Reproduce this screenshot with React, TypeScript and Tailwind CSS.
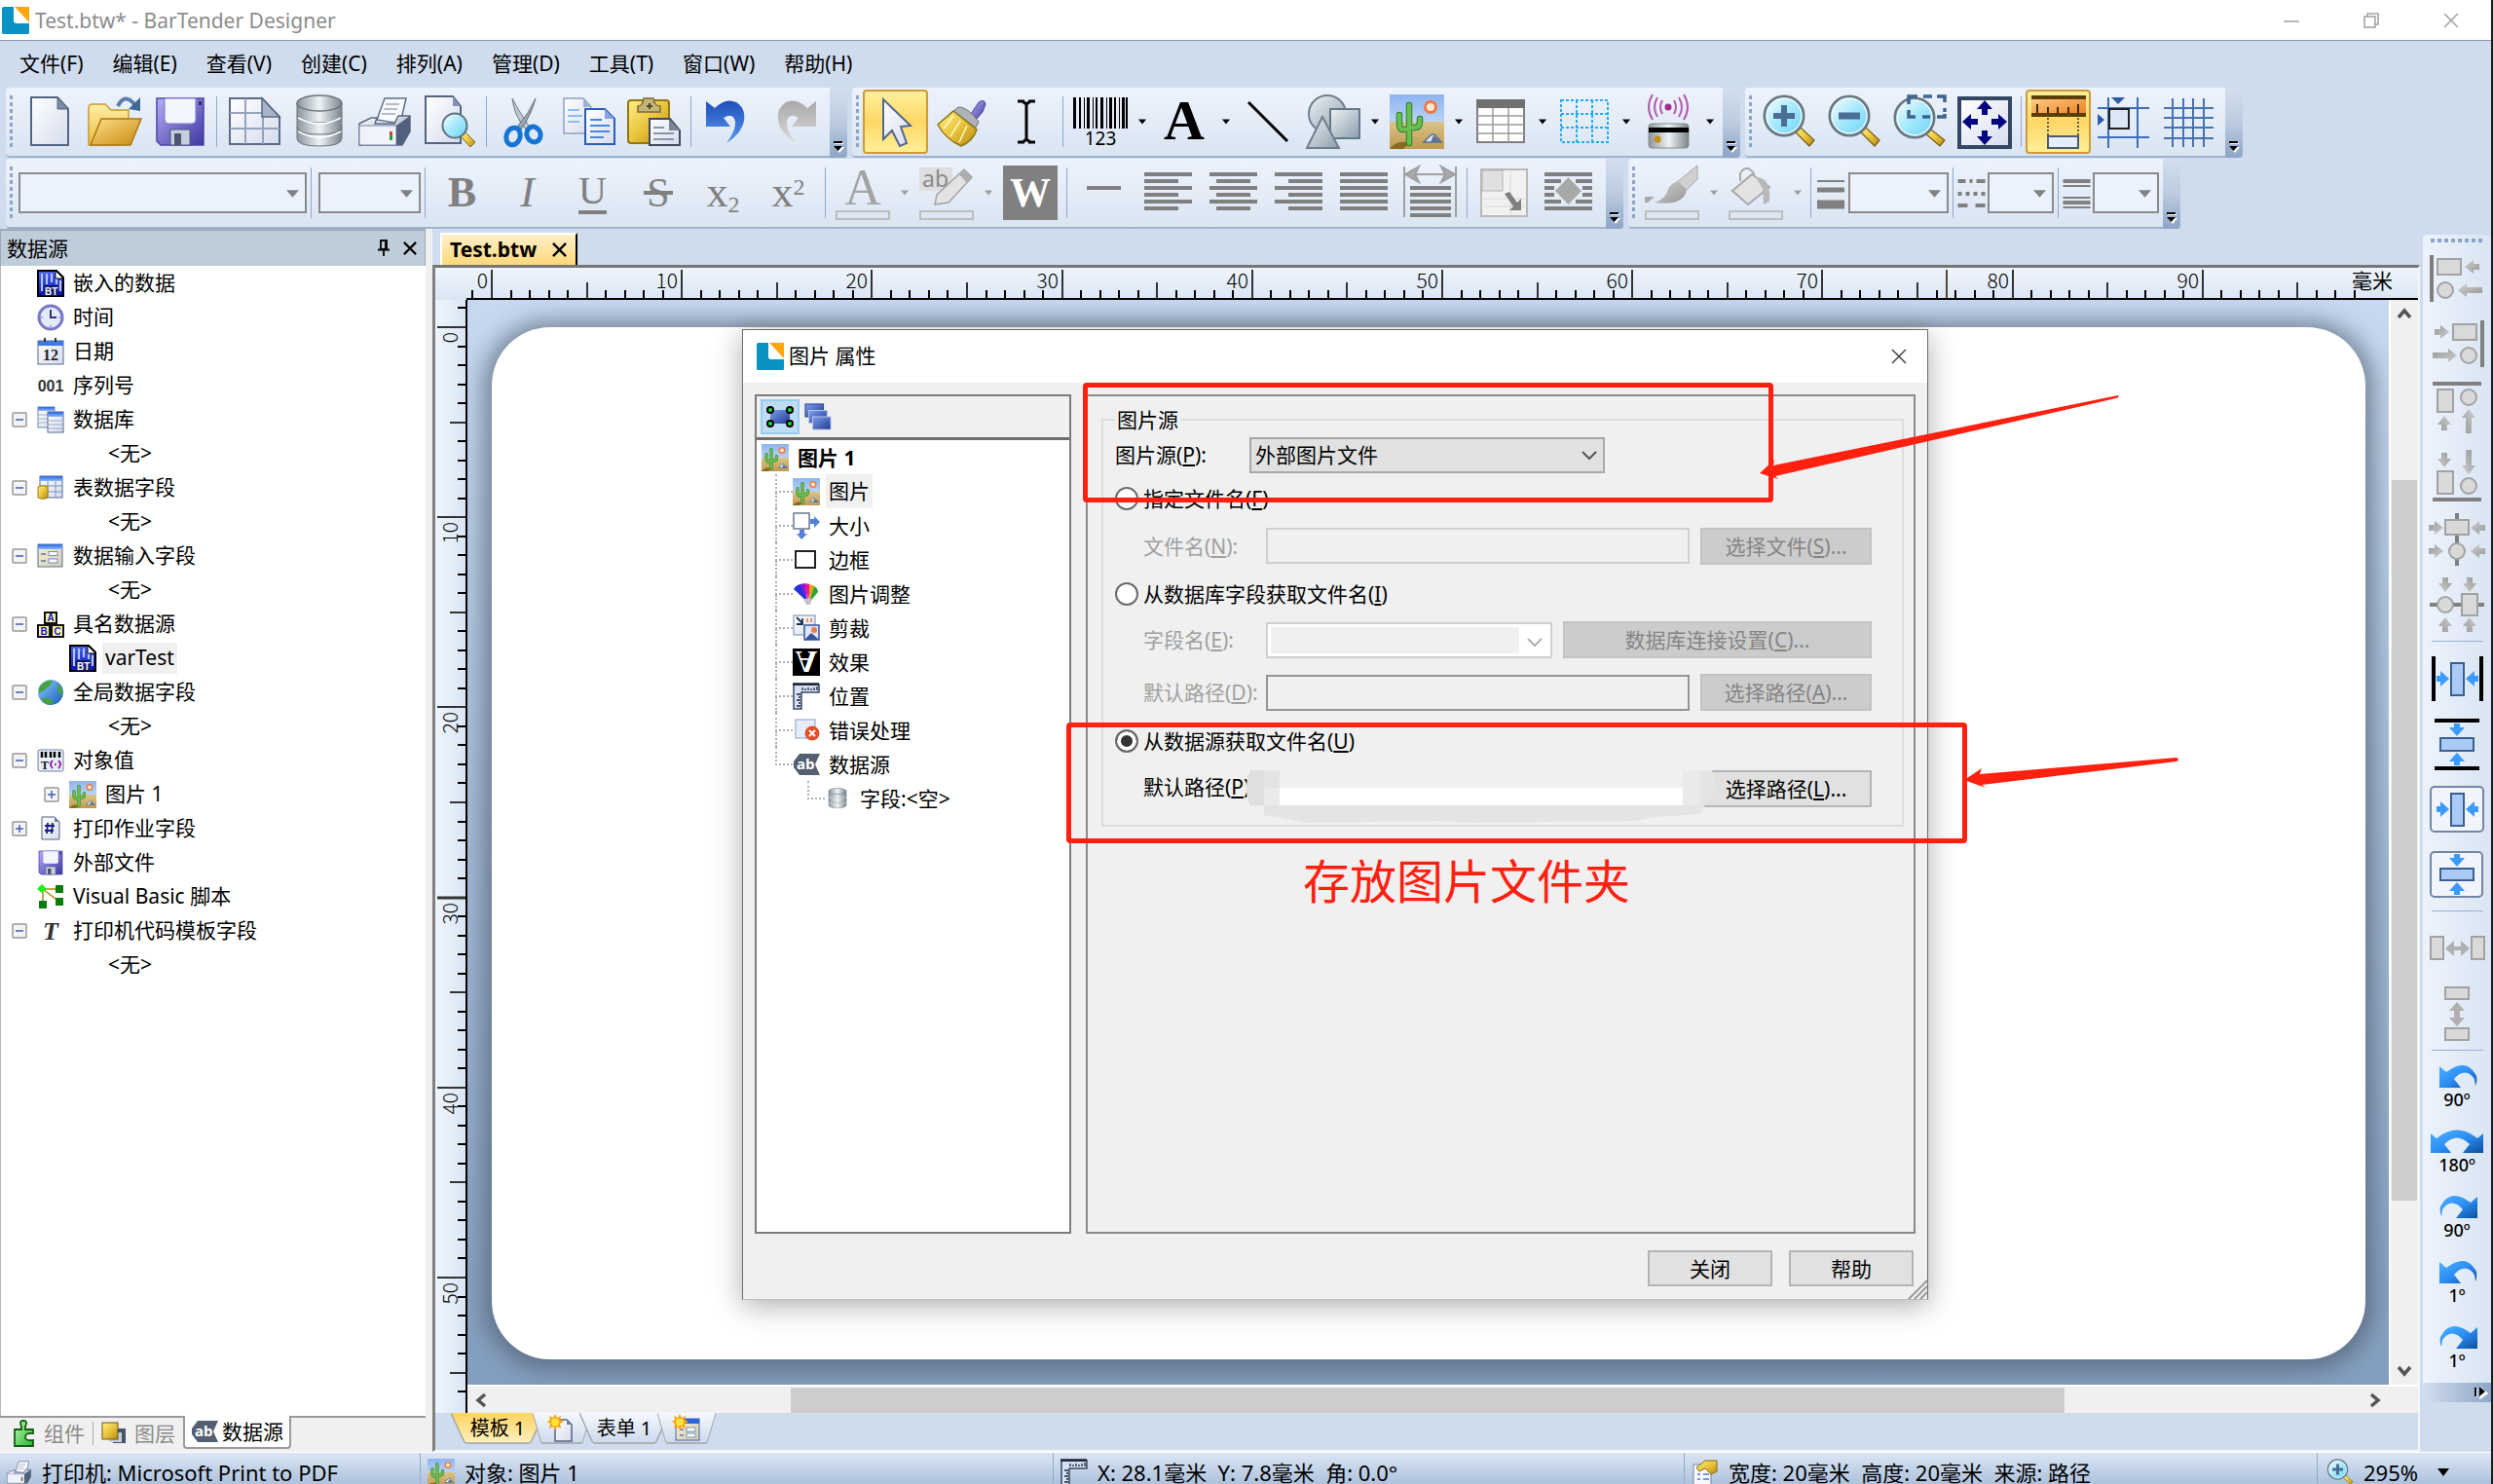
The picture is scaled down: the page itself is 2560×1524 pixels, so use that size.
import React from "react";

type Kids = { children?: React.ReactNode };

/* ---------- shared drawing helpers ---------- */

function Defs() {
  const g = (id: string, a: string, b: string, dir: "v" | "h" | "d" = "v", mid?: string) => (
    <linearGradient id={id} x1="0" y1="0" x2={dir === "v" ? "0" : "1"} y2={dir === "h" ? "0" : "1"}>
      <stop offset="0" stopColor={a} />
      {mid ? <stop offset=".5" stopColor={mid} /> : null}
      <stop offset="1" stopColor={b} />
    </linearGradient>
  );
  return (
    <svg className="absolute h-0 w-0" aria-hidden="true">
      <defs>
        {g("paper", "#ffffff", "#d5dced", "d")}
        {g("folder", "#fde08a", "#c98910", "d")}
        {g("folderBack", "#fff0a8", "#eab93c", "v")}
        {g("violet", "#b7aef5", "#3d36a0", "d")}
        {g("steel", "#8b959c", "#79848b", "h", "#eef3f6")}
        {g("slate", "#ffffff", "#8e9fb8", "d")}
        {g("glass", "#ffffff", "#66d4f6", "d", "#a5e9fd")}
        {g("gold", "#fff08a", "#b98812", "d", "#e9c53c")}
        {g("blue", "#1c50b8", "#5c98f2", "v")}
        {g("grey", "#a8a8a8", "#dcdcdc", "v")}
        {g("greyArrow", "#cfcfcf", "#989898", "d")}
        {g("shape", "#eef3f7", "#8b9dab", "d")}
        {g("sky", "#8db4f0", "#e9f1fb", "v")}
        {g("sand", "#dcc48a", "#bd9a50", "v")}
        {g("orange", "#ffd08a", "#ee7d20", "d")}
        {g("azure", "#4db1ff", "#0c4f9c", "d", "#2c8ef4")}
        {g("navy", "#7f9ff0", "#1c3a8c", "d")}
        {g("btBlue", "#4a6af2", "#0713b8", "v")}
        {g("sheet", "#2a64dd", "#8cb8fb", "v")}
        {g("globe", "#8fd0ff", "#1458b8", "d")}
        {g("green", "#b4ffb0", "#28b028", "d")}
        {g("cream", "#f4efda", "#d3cfae", "d")}
        {g("tabGold", "#ffd363", "#fff0bd", "v")}
        {g("tabBlue", "#f6f9fe", "#ccd9ec", "v")}
      </defs>
    </svg>
  );
}

function Ic({ children, vb = "0 0 56 56", className = "h-14 w-14" }: Kids & { vb?: string; className?: string }) {
  return (
    <svg viewBox={vb} className={className + " shrink-0 overflow-visible"} fill="none" aria-hidden="true">
      {children}
    </svg>
  );
}

const AppLogo = ({ className }: { className: string }) => (
  <Ic vb="0 0 28 28" className={className}>
    <rect width="28" height="28" rx="1.5" fill="#0a93c2" />
    <path d="M12 0H28V17H15Q12 17 12 14Z" fill="#fff" />
    <path d="M13 0H28V16Z" fill="#fda50f" />
  </Ic>
);

const Cactus = ({ className = "h-7 w-7" }: { className?: string }) => (
  <Ic className={className}>
    <rect width="56" height="56" fill="url(#sky)" />
    <rect y="28" width="56" height="28" fill="url(#sand)" />
    <path d="M0 56Q8 46 20 50L14 56Z" fill="#8a6a20" />
    <path d="M20 50V11M20 36H14Q10 36 10 30V21M21 34H26Q31 34 31 28V25" stroke="#2e7d32" strokeWidth="6.5" strokeLinecap="round" />
    <path d="M20 50V11M20 36H14Q10 36 10 30V21M21 34H26Q31 34 31 28V25" stroke="#67bf4c" strokeWidth="4.5" strokeLinecap="round" />
    <circle cx="42" cy="13" r="5.5" fill="#fbe7d2" stroke="#ee7a44" strokeWidth="3" />
    <path d="M35 49L43 41L46 41L53 49Z" fill="#e0e8f4" stroke="#5c6f92" strokeWidth="1.5" />
    <path d="M42 49L45 42L53 49Z" fill="#5f7398" />
  </Ic>
);

const Floppy = ({ className }: { className?: string }) => (
  <Ic className={className}>
    <path d="M4 4H52V52H8L4 48Z" fill="url(#violet)" stroke="#4a44a8" strokeWidth="1.5" />
    <path d="M12 4H44V26Q44 30 40 30H16Q12 30 12 26Z" fill="#f3f5ff" stroke="#7a78d0" />
    <rect x="18" y="36" width="20" height="16" fill="#c5cfdc" stroke="#4a5580" />
    <rect x="22" y="40" width="7" height="12" fill="#4a5670" />
    <rect x="47" y="7" width="3" height="4" fill="#2c2a80" />
  </Ic>
);

const Printer = ({ className }: { className?: string }) => (
  <Ic className={className}>
    <path d="M20 26L28 4H50L44 30Z" fill="#fafbfe" stroke="#5e6d86" strokeWidth="1.5" />
    <path d="M29 10H43M27 15H41M25 20H39" stroke="#a0a8b8" strokeWidth="1.5" />
    <path d="M2 30L14 24H20L18 30H38L42 22H54V38L46 52H2Z" fill="url(#slate)" stroke="#5b6984" strokeWidth="1.5" />
    <path d="M2 32H40V52H4Q2 52 2 50Z" fill="#f0f3fa" stroke="#7787a2" />
    <path d="M40 32L54 22V38L46 52H40Z" fill="#51607c" />
    <rect x="33" y="38" width="3" height="9" fill="#d04040" />
    <rect x="33" y="42" width="3" height="5" fill="#20a030" />
  </Ic>
);

const Cylinder = ({ className }: { className?: string }) => (
  <Ic className={className}>
    {[36, 24, 12].map((y) => (
      <path key={y} d={`M5 ${y - 3}V${y + 9}Q5 ${y + 17} 28 ${y + 17}Q51 ${y + 17} 51 ${y + 9}V${y - 3}Z`} fill="url(#steel)" stroke="#6b767d" strokeWidth="1" />
    ))}
    <ellipse cx="28" cy="9" rx="23" ry="8" fill="url(#steel)" stroke="#68737a" strokeWidth="1.5" />
    <path d="M6 24Q28 36 50 24M6 38Q28 50 50 38" stroke="#fff" strokeWidth="1.5" />
  </Ic>
);

const Lens = ({ children, cx = 23, cy = 22 }: Kids & { cx?: number; cy?: number }) => (
  <>
    <path d={`M${cx + 12} ${cy + 17}L${cx + 17} ${cy + 12}L54 47L49 53Z`} fill="url(#gold)" stroke="#7a5a14" strokeWidth="1.2" />
    <circle cx={cx} cy={cy} r="20" fill="url(#glass)" stroke="#687780" strokeWidth="3" />
    <circle cx={cx} cy={cy} r="18" stroke="#e9f8ff" strokeWidth="1.5" />
    {children}
  </>
);

const BtFile = () => (
  <Ic vb="0 0 28 28" className="h-7 w-7">
    <path d="M1 1H20L27 8V27H1Z" fill="url(#btBlue)" stroke="#000" strokeWidth="2" />
    <path d="M5 4V22M10 4V15M15 4V13M20 8V15M24 11V22" stroke="#b9c6ff" strokeWidth="2" />
    <path d="M19 1V9H27Z" fill="#fff" stroke="#000" />
    <rect x="7" y="16" width="14" height="11" fill="#111a60" />
    <text x="8" y="26" fontSize="10" fontWeight="700" fill="#fff" fontFamily="Liberation Sans">BT</text>
  </Ic>
);

const AbTag = ({ className = "h-7 w-7" }: { className?: string }) => (
  <Ic vb="0 0 28 28" className={className}>
    <path d="M7 3H28L23 14L28 25H7L1 17V11Z" fill="#546072" />
    <text x="4" y="19" fontSize="15" fontWeight="700" fill="#fff" fontFamily="Open Sans">ab</text>
  </Ic>
);

const RulerCorner = () => (
  <Ic vb="0 0 28 28" className="h-7 w-7">
    <path d="M1 2H27V10H9V27H1Z" fill="#d5e2f6" stroke="#38475f" strokeWidth="1.5" />
    <path d="M0 1.5H27" stroke="#1c2430" strokeWidth="2.5" />
    <path d="M10 8V5M13 8V6M16 8V5M19 8V6M22 8V5M25 8V4M4 12H8M6 15H8M4 18H8M6 21H8M4 24H8" stroke="#1c2430" strokeWidth="1.3" />
  </Ic>
);

const FormIcon = () => (
  <Ic vb="0 0 28 28" className="h-7 w-7">
    <rect x="1" y="2" width="25" height="23" fill="url(#cream)" stroke="#5b6f9c" />
    <rect x="1" y="2" width="25" height="5" fill="url(#sheet)" />
    <path d="M4 12H9M4 19H9" stroke="#64759c" strokeWidth="1.5" />
    <rect x="12" y="9.500" width="9" height="4" fill="#fff" stroke="#7890c0" />
    <rect x="12" y="17" width="9" height="4" fill="#fff" stroke="#7890c0" />
  </Ic>
);

/* ---------- toolbar parts ---------- */

function Bar({ children }: Kids) {
  return (
    <div role="toolbar" className="flex h-[72px]">
      <div className="flex items-center rounded-l border-b-2 border-[#9fb3cf] bg-linear-to-b from-[#edf3fd] to-[#dae5f2] pr-1">
        <div className="flex w-[11px] justify-center">
          <div className="h-[54px] w-[3px] bg-[repeating-linear-gradient(to_bottom,#8ba4c8_0_4px,transparent_4px_7px)]" />
        </div>
        {children}
      </div>
      <button aria-label="更多按钮" className="flex w-[18px] flex-col items-center justify-end rounded-r bg-linear-to-b from-[#d3dfee] via-[#bccbe0] to-[#8ea5c6] pb-1">
        <Ic vb="0 0 12 14" className="h-[14px] w-3">
          <path d="M2 3H11" stroke="#fff" strokeWidth="2" />
          <path d="M1 2H10" stroke="#000" strokeWidth="2" />
          <path d="M2 7H12L7 13Z" fill="#fff" />
          <path d="M1 6H10L5.500 11Z" fill="#000" />
        </Ic>
      </button>
    </div>
  );
}

const Sep = () => (
  <div className="flex w-[9px] justify-center">
    <div className="h-[52px] w-px bg-[#8fa9cc]" />
  </div>
);

function Tool({ label, active, drop, dim, children }: Kids & { label: string; active?: boolean; drop?: boolean; dim?: boolean }) {
  return (
    <>
      <button
        aria-label={label}
        className={
          active
            ? "flex h-[66px] w-[67px] items-center justify-center rounded-sm border-2 border-[#cf9a38] bg-linear-to-b from-[#fff09a] via-[#ffd766] to-[#fff096]"
            : "flex h-[66px] w-[67px] items-center justify-center"
        }
      >
        {children}
      </button>
      {drop ? (
        <button aria-label={label + "选项"} className="flex w-[19px] justify-center">
          <Ic vb="0 0 10 6" className="h-[6px] w-2">
            <path d="M0 0H10L5 6Z" fill={dim ? "#a0a0a0" : "#000"} />
          </Ic>
        </button>
      ) : null}
    </>
  );
}

function Combo({ label, className }: { label: string; className: string }) {
  return (
    <div className={"relative h-[42px] " + className}>
      <select aria-label={label} className="h-full w-full appearance-none border-2 border-[#8a8a8a] bg-[#ebf2fd]" />
      <Ic vb="0 0 14 8" className="pointer-events-none absolute top-[18px] right-2 h-2 w-[13px]">
        <path d="M0 0H14L7 8Z" fill="#808080" />
      </Ic>
    </div>
  );
}

const lines = (spec: number[][], c = "#808080") =>
  spec.map(([x1, x2, y], i) => <path key={i} d={`M${x1} ${y}H${x2}`} stroke={c} strokeWidth="4" />);

function StandardBar() {
  return (
    <Bar>
      <Tool label="新建">
        <Ic>
          <path d="M9 3H36L47 15V52H9Z" fill="url(#paper)" stroke="#53657f" strokeWidth="2" />
          <path d="M36 3V15H47Z" fill="#7c8ca6" stroke="#53657f" />
        </Ic>
      </Tool>
      <Tool label="打开">
        <Ic>
          <path d="M1 52V14Q1 10 5 10H18L24 16H42V28L34 52Z" fill="url(#folderBack)" stroke="#c89a34" strokeWidth="1.500" />
          <path d="M3 52L14 25H55L44 52Z" fill="url(#folder)" stroke="#a87810" strokeWidth="1.500" />
          <path d="M31 12Q38 -2 48 10" stroke="#5b7eaa" strokeWidth="4" />
          <path d="M54 3V17L42 15Z" fill="#3f679a" />
        </Ic>
      </Tool>
      <Tool label="保存"><Floppy /></Tool>
      <Sep />
      <Tool label="页面设置">
        <Ic>
          <path d="M3 4H36L54 23V51H3Z" fill="url(#paper)" stroke="#5a6b86" strokeWidth="2" />
          <path d="M3 19H40M3 35H54M19 4V51M37 22V51" stroke="#95a3bb" strokeWidth="2" />
          <path d="M36 4V23H54Z" fill="#a7b4c9" stroke="#5a6b86" strokeWidth="1.500" />
        </Ic>
      </Tool>
      <Tool label="数据库连接"><Cylinder /></Tool>
      <Tool label="打印"><Printer /></Tool>
      <Tool label="打印预览">
        <Ic>
          <path d="M3 2H31L39 12V50H3Z" fill="url(#paper)" stroke="#53657f" strokeWidth="2" />
          <path d="M31 2V12H39Z" fill="#8092ae" />
          <path d="M39 43L44 39L54 49L49 54Z" fill="url(#gold)" stroke="#80631a" />
          <circle cx="33" cy="32" r="12.500" fill="url(#glass)" stroke="#60727e" strokeWidth="2" />
        </Ic>
      </Tool>
      <Sep />
      <Tool label="剪切">
        <Ic>
          <path d="M16 4Q18 22 30 36L33 32Q22 16 16 4Z" fill="#c2c9d2" stroke="#6e7883" />
          <path d="M40 4Q36 20 25 36L22 32Q34 18 40 4Z" fill="#9aa5b2" stroke="#68727e" />
          <ellipse cx="17" cy="43" rx="7" ry="9" stroke="#1573d4" strokeWidth="5" transform="rotate(18 17 43)" />
          <ellipse cx="38" cy="41" rx="7" ry="8" stroke="#1573d4" strokeWidth="5" transform="rotate(-22 38 41)" />
        </Ic>
      </Tool>
      <Tool label="复制">
        <Ic>
          <path d="M2 4H22L30 13V40H2Z" fill="url(#paper)" stroke="#8fa1c2" strokeWidth="1.500" />
          <path d="M22 4V13H30Z" fill="#a0b2d0" />
          <path d="M6 16H18M6 22H21M6 28H18" stroke="#8ebcf4" strokeWidth="2" />
          <path d="M24 15H44L54 25V51H24Z" fill="url(#paper)" stroke="#2c5cba" strokeWidth="2" />
          <path d="M44 15V25H54Z" fill="#84a4de" />
          <path d="M29 26H41M29 32H49M29 38H49M29 44H43" stroke="#4587e4" strokeWidth="2" />
        </Ic>
      </Tool>
      <Tool label="粘贴">
        <Ic>
          <rect x="1" y="6" width="42" height="44" rx="3" fill="url(#gold)" stroke="#977414" strokeWidth="2" />
          <path d="M11 18V12Q16 12 17 4H27Q28 12 34 12V18Z" fill="#c2b47a" stroke="#7c6b2d" strokeWidth="1.500" />
          <path d="M20 12H26M23 9V15" stroke="#54471c" strokeWidth="2" />
          <path d="M23 25H44L54 37V52H23Z" fill="url(#paper)" stroke="#3f4a5c" strokeWidth="2" />
          <path d="M43 25V37H54Z" fill="#7a8698" />
          <path d="M27 34H38M27 40H48M27 46H48" stroke="#8a95a5" strokeWidth="2" />
        </Ic>
      </Tool>
      <Sep />
      <Tool label="撤消">
        <Ic>
          <path d="M5 7L14 14Q25 3 36 8Q46 14 44 27Q42 40 26 50Q36 36 35 28Q33 18 23 24L30 33H5Z" fill="url(#blue)" />
        </Ic>
      </Tool>
      <Tool label="恢复">
        <Ic>
          <path d="M51 7L42 14Q31 3 20 8Q10 14 12 27Q14 40 30 50Q20 36 21 28Q23 18 33 24L26 33H51Z" fill="url(#grey)" />
        </Ic>
      </Tool>
    </Bar>
  );
}

function ObjectBar() {
  const bars = [0, 6, 11, 14, 20, 23, 28, 34, 37, 42, 47, 50, 54];
  const wide = [3, 2, 1, 3, 1, 2, 3, 1, 3, 2, 1, 3, 2];
  return (
    <Bar>
      <Tool label="选择" active>
        <Ic>
          <path d="M15 5V46L24 37L32 53L39 50L33 33L43 32Z" fill="url(#paper)" stroke="#52678f" strokeWidth="2" />
        </Ic>
      </Tool>
      <Tool label="格式刷">
        <Ic>
          <path d="M38 20L46 8Q52 4 53 10L50 18L43 26Z" fill="url(#violet)" stroke="#4e4a98" />
          <path d="M25 13Q34 12 46 28L43 34L20 17Z" fill="#aeb3b8" stroke="#6d7277" />
          <path d="M20 17L44 36Q40 48 28 53Q12 46 4 31Z" fill="url(#gold)" stroke="#8f7416" strokeWidth="1.500" />
          <path d="M20 22L10 35M27 27L17 43M34 32L26 49" stroke="#fff8c8" strokeWidth="1.500" />
        </Ic>
      </Tool>
      <Tool label="文本光标">
        <Ic>
          <path d="M19 7H26M30 7H37M19 49H26M30 49H37M28 9V47M24 7L28 10L32 7M24 49L28 46L32 49" stroke="#000" strokeWidth="3" />
        </Ic>
      </Tool>
      <Sep />
      <Tool label="条形码" drop>
        <Ic>
          {bars.map((x, i) => <rect key={x} x={x} y="3" width={wide[i]} height="32" fill="#000" />)}
          <text x="28" y="52" textAnchor="middle" fontSize="19" fill="#000" fontFamily="Noto Sans">123</text>
        </Ic>
      </Tool>
      <Tool label="文本" drop>
        <Ic><text x="28" y="46" textAnchor="middle" fontSize="58" fontWeight="700" fill="#000" fontFamily="Liberation Serif">A</text></Ic>
      </Tool>
      <Tool label="线条">
        <Ic><path d="M8 8L48 48" stroke="#000" strokeWidth="3" /></Ic>
      </Tool>
      <Tool label="形状" drop>
        <Ic>
          <circle cx="22" cy="20" r="19" fill="url(#shape)" stroke="#6e7f8e" strokeWidth="2" />
          <rect x="25" y="15" width="30" height="30" fill="url(#shape)" stroke="#64788a" strokeWidth="2" />
          <path d="M17 23L34 55H1Z" fill="url(#shape)" stroke="#6e7f8e" strokeWidth="2" />
        </Ic>
      </Tool>
      <Tool label="图片" drop><Cactus className="h-14 w-14" /></Tool>
      <Tool label="表格" drop>
        <Ic>
          <rect x="4" y="6" width="48" height="43" fill="#fff" stroke="#808080" strokeWidth="2" />
          <rect x="3" y="5" width="50" height="9" fill="#707070" />
          <path d="M4 22H52M4 31H52M4 40H52M20 14V49M36 14V49" stroke="#9a9a9a" strokeWidth="1.500" />
        </Ic>
      </Tool>
      <Tool label="布局网格" drop>
        <Ic><path d="M4 6H52V49H4ZM4 20H52M4 34H52M20 6V49M36 6V49" stroke="#22aef0" strokeWidth="2" strokeDasharray="3 2" /></Ic>
      </Tool>
      <Tool label="编码器" drop>
        <Ic>
          <circle cx="28" cy="13" r="3.500" fill="#a02c90" />
          <path d="M22 6Q18 13 22 20M34 6Q38 13 34 20M17 3Q11 13 17 23M39 3Q45 13 39 23M12 0Q4 13 12 26M44 0Q52 13 44 26" stroke="#b45cab" strokeWidth="2" />
          <rect x="8" y="30" width="41" height="25" rx="3" fill="url(#steel)" stroke="#8b8b8b" />
          <rect x="8" y="34" width="41" height="5" fill="#000" />
          <circle cx="17" cy="46" r="3.500" fill="#c98e14" />
        </Ic>
      </Tool>
    </Bar>
  );
}

function ViewBar() {
  return (
    <Bar>
      <Tool label="放大"><Ic><Lens><path d="M12 22H34M23 11V33" stroke="#4b6d96" strokeWidth="6" /></Lens></Ic></Tool>
      <Tool label="缩小"><Ic><Lens><path d="M12 22H34" stroke="#4b6d96" strokeWidth="7" /></Lens></Ic></Tool>
      <Tool label="缩放选择">
        <Ic>
          <Lens cy={24} />
          <path d="M17 10V2H26M32 2H41M46 2H54V8M54 14V18M17 16V23H24M31 23H39M46 23H54V20" stroke="#3e648f" strokeWidth="3.500" />
        </Ic>
      </Tool>
      <Tool label="适合窗口">
        <Ic>
          <rect x="2" y="4" width="52" height="50" fill="url(#paper)" stroke="#334763" strokeWidth="4" />
          <path d="M28 6L36 15H31V21H25V15H20ZM28 52L20 43H25V37H31V43H36ZM5 28L14 20V25H21V31H14V36ZM51 28L42 20V25H35V31H42V36Z" fill="#050582" />
        </Ic>
      </Tool>
      <Sep />
      <Tool label="标尺" active>
        <Ic>
          <rect y="2" width="56" height="20" fill="url(#orange)" />
          <path d="M0 3H56M0 21H56" stroke="#5c3f08" strokeWidth="4" />
          <path d="M6 19V10M17 19V13M27 19V13M38 19V13M48 19V10" stroke="#3d2b06" strokeWidth="2" />
          <path d="M17 24V42M48 24V42" stroke="#2c2c2c" strokeWidth="1.500" strokeDasharray="2 2" />
          <rect x="17" y="43" width="31" height="12" fill="#e4edfa" stroke="#48597a" strokeWidth="2" />
        </Ic>
      </Tool>
      <Tool label="对齐网格">
        <Ic>
          <path d="M12 3V55M42 3V55M1 14H54M1 44H54" stroke="#3c6fb8" strokeWidth="2" />
          <rect x="13" y="15" width="20" height="20" fill="#dbe6f6" stroke="#222" strokeWidth="2" />
          <path d="M15 3H29L22 10ZM1 20V32L8 26Z" fill="#2a5caa" />
        </Ic>
      </Tool>
      <Tool label="显示网格">
        <Ic><path d="M11 4V54M22 4V54M32 4V54M43 4V54M2 14H53M2 24H53M2 34H53M2 45H53" stroke="#4573b4" strokeWidth="2" /></Ic>
      </Tool>
    </Bar>
  );
}

const glyph = "font-['Liberation_Serif',serif] text-[#808080] leading-none ";

function TextBar() {
  return (
    <Bar>
      <Combo label="字体" className="ml-[2px] w-[296px]" />
      <Sep />
      <Combo label="字号" className="ml-[3px] w-[105px]" />
      <Sep />
      <Tool label="加粗"><span className={glyph + "text-[44px] font-bold"}>B</span></Tool>
      <Tool label="倾斜"><span className={glyph + "text-[44px] italic"}>I</span></Tool>
      <Tool label="下划线"><span className={glyph + "border-b-4 border-[#808080] text-[40px]"}>U</span></Tool>
      <Tool label="删除线">
        <Ic>
          <text x="28" y="42" textAnchor="middle" fontSize="42" fill="#808080" fontFamily="Liberation Serif">S</text>
          <path d="M13 28H43" stroke="#808080" strokeWidth="4" />
        </Ic>
      </Tool>
      <Tool label="下标"><span className={glyph + "text-[44px]"}>x<sub className="text-2xl">2</sub></span></Tool>
      <Tool label="上标"><span className={glyph + "text-[44px]"}>x<sup className="text-2xl">2</sup></span></Tool>
      <Sep />
      <Tool label="文字颜色" drop dim>
        <Ic>
          <text x="28" y="40" textAnchor="middle" fontSize="52" fill="#a4a4a4" fontFamily="Liberation Serif">A</text>
          <rect x="1" y="47" width="54" height="8" stroke="#bdbdbd" strokeWidth="2" />
        </Ic>
      </Tool>
      <Tool label="突出显示" drop dim>
        <Ic>
          <rect y="2" width="34" height="24" fill="#dedede" />
          <text x="3" y="22" fontSize="23" fill="#8a8a8a" fontFamily="Noto Sans">ab</text>
          <path d="M46 4L54 12L30 38L16 40L18 30Z" fill="#e3e3e3" stroke="#a5a5a5" strokeWidth="1.500" />
          <path d="M46 4L54 12L49 18L41 9Z" fill="#adadad" />
          <rect x="1" y="47" width="54" height="8" stroke="#bdbdbd" strokeWidth="2" />
        </Ic>
      </Tool>
      <Tool label="黑白反转">
        <Ic>
          <rect width="56" height="56" fill="#808080" />
          <text x="28" y="42" textAnchor="middle" fontSize="42" fontWeight="700" fill="#fff" fontFamily="Liberation Serif">W</text>
        </Ic>
      </Tool>
      <Sep />
      <Tool label="单行"><Ic>{lines([[10, 45, 23]])}</Ic></Tool>
      <Tool label="左对齐"><Ic>{lines([[2, 51, 9], [2, 37, 16], [2, 51, 23], [2, 37, 30], [2, 51, 37], [2, 37, 44]])}</Ic></Tool>
      <Tool label="居中"><Ic>{lines([[2, 51, 9], [9, 44, 16], [2, 51, 23], [9, 44, 30], [2, 51, 37], [9, 44, 44]])}</Ic></Tool>
      <Tool label="右对齐"><Ic>{lines([[2, 51, 9], [16, 51, 16], [2, 51, 23], [16, 51, 30], [2, 51, 37], [16, 51, 44]])}</Ic></Tool>
      <Tool label="两端对齐"><Ic>{lines([[2, 51, 9], [2, 51, 16], [2, 51, 23], [2, 51, 30], [2, 51, 37], [2, 51, 44]])}</Ic></Tool>
      <Tool label="自动调整">
        <Ic>
          <path d="M1 1V53M54 1V53" stroke="#a0a0a0" strokeWidth="2" />
          <path d="M12 9H43M2 9L16 1L12 9L16 17ZM53 9L39 1L43 9L39 17Z" fill="#a8a8a8" stroke="#a0a0a0" strokeWidth="2" />
          {lines([[7, 49, 23], [7, 49, 30], [7, 49, 37], [7, 49, 44], [7, 49, 51]])}
        </Ic>
      </Tool>
      <Sep />
      <Tool label="文本框大小">
        <Ic>
          <rect x="4" y="4" width="47" height="48" fill="#f1f1f1" stroke="#b8b8b8" strokeWidth="2" />
          <path d="M5 5H26V26H5Z" fill="#e0e0e0" stroke="#b4b4b4" />
          <path d="M34 4V52M4 34H51M4 42H51" stroke="#d8d8d8" />
          <path d="M28 29L33 27L41 38L45 34V46H33L37 42Z" fill="#808080" />
        </Ic>
      </Tool>
      <Tool label="环绕">
        <Ic>
          {lines([[2, 51, 9], [2, 19, 16], [34, 51, 16], [2, 12, 23], [41, 51, 23], [2, 12, 30], [41, 51, 30], [2, 19, 37], [34, 51, 37], [2, 51, 44]])}
          <path d="M26.500 12L40 26L26.500 40L13 26Z" fill="#a8a8a8" />
        </Ic>
      </Tool>
    </Bar>
  );
}

function LineBar() {
  return (
    <Bar>
      <Tool label="线条颜色" drop dim>
        <Ic>
          <path d="M54 0V14L43 25L33 17Z" fill="#d0d0d0" stroke="#a8a8a8" />
          <path d="M34 16L43 25Q40 42 10 38Q22 34 24 24Q28 17 34 16Z" fill="url(#greyArrow)" />
          <path d="M0 32H10L3 38H0Z" fill="#a8a8a8" />
          <rect x="1" y="47" width="54" height="8" stroke="#bdbdbd" strokeWidth="2" />
        </Ic>
      </Tool>
      <Tool label="填充颜色" drop dim>
        <Ic>
          <path d="M12 16V8Q18 -2 26 8V20" stroke="#a8a8a8" strokeWidth="2" />
          <path d="M24 9L42 22L20 40L4 26Z" fill="#e3e3e3" stroke="#a8a8a8" strokeWidth="2" />
          <path d="M28 12Q44 12 42 37L36 40L35 24Z" fill="#b8b8b8" />
          <rect x="1" y="47" width="54" height="8" stroke="#bdbdbd" strokeWidth="2" />
        </Ic>
      </Tool>
      <Sep />
      <Ic vb="0 0 28 42" className="mr-[2px] h-[42px] w-[32px]">
        <path d="M0 9H28" stroke="#808080" strokeWidth="2" />
        <path d="M0 18H28" stroke="#808080" strokeWidth="5" />
        <path d="M0 33H28" stroke="#808080" strokeWidth="9" />
      </Ic>
      <Combo label="线条粗细" className="w-[103px]" />
      <Sep />
      <Ic vb="0 0 28 42" className="mr-[2px] h-[42px] w-[29px]">
        <path d="M0 9H8M12 9H15M19 9H28M0 22H4M8 22H12M16 22H20M24 22H28M0 34H10M18 34H28" stroke="#808080" strokeWidth="4" />
      </Ic>
      <Combo label="虚线样式" className="w-[68px]" />
      <Sep />
      <Ic vb="0 0 28 42" className="mr-[2px] h-[42px] w-[29px]">
        <path d="M0 9H28M0 31H28" stroke="#808080" strokeWidth="4" />
        <path d="M0 14H28M0 26H28M0 36H28" stroke="#808080" strokeWidth="2" />
      </Ic>
      <Combo label="复合线型" className="w-[68px]" />
    </Bar>
  );
}

/* ---------- right-hand arrange bar ---------- */

const G = { fill: "#d9d9d9", stroke: "#a2a2a2", strokeWidth: 2 };
const arrowL = "M0 0L9 -7V-3H15V3H9V7Z";
const Ar = ({ x, y, r, long, blue }: { x: number; y: number; r: number; long?: boolean; blue?: boolean }) => (
  <path d={long ? "M0 0L9 -7V-3H25V3H9V7Z" : blue ? "M0 0L9 -8V-3H13V3H9V8Z" : arrowL} transform={`translate(${x} ${y}) rotate(${r})`} fill={blue ? "#3a9bff" : "url(#greyArrow)"} />
);

const RSep = () => (
  <div className="flex h-[9px] items-center">
    <div className="h-px w-[53px] bg-[#9ab0d0]" />
  </div>
);

function RTool({ label, text, children }: Kids & { label: string; text?: string }) {
  return (
    <button aria-label={label} className="flex h-[67px] w-14 flex-col items-center justify-center">
      {text ? (
        <>
          <Ic vb="0 0 56 24" className="h-6 w-14">{children}</Ic>
          <span className="text-lg leading-6 font-medium text-black">{text}</span>
        </>
      ) : (
        <Ic>{children}</Ic>
      )}
    </button>
  );
}

const rotL = <path d="M10 2L17 8Q38 -8 48 12Q49 18 47 22Q47 12 39 9Q32 7 25 15L32 24H10Z" fill="url(#azure)" />;
const rotR = <path d="M49 2L42 8Q21 -8 11 12Q10 18 12 22Q12 12 20 9Q27 7 34 15L27 24H49Z" fill="url(#azure)" />;

function ArrangeBar() {
  return (
    <div role="toolbar" aria-label="排列" className="flex w-[70px] flex-col pt-[6px]">
      <div className="flex flex-col items-center rounded-t bg-linear-to-r from-[#edf3fd] to-[#d9e5f2] pb-[2px]">
        <div className="flex h-[11px] items-center">
          <div className="h-1 w-[54px] bg-[repeating-linear-gradient(to_right,#8ba4c8_0_4px,transparent_4px_7px)]" />
        </div>
        <RTool label="左对齐对象">
          <path d="M2 4V52" stroke="#808080" strokeWidth="4" />
          <rect x="8" y="8" width="24" height="16" {...G} /><circle cx="16" cy="40" r="8" {...G} />
          <Ar x={36} y={16} r={0} /><Ar x={29} y={40} r={0} long />
        </RTool>
        <RTool label="右对齐对象">
          <path d="M54 4V52" stroke="#808080" strokeWidth="4" />
          <rect x="24" y="8" width="24" height="16" {...G} /><circle cx="40" cy="40" r="8" {...G} />
          <Ar x={20} y={16} r={180} /><Ar x={28} y={40} r={180} long />
        </RTool>
        <RTool label="顶端对齐">
          <path d="M3 2H53" stroke="#808080" strokeWidth="4" />
          <rect x="8" y="8" width="16" height="23" {...G} /><circle cx="40" cy="16" r="8" {...G} />
          <Ar x={15} y={35} r={90} /><Ar x={40} y={28} r={90} long />
        </RTool>
        <RTool label="底端对齐">
          <path d="M3 54H53" stroke="#808080" strokeWidth="4" />
          <rect x="8" y="25" width="16" height="23" {...G} /><circle cx="40" cy="40" r="8" {...G} />
          <Ar x={15} y={21} r={-90} /><Ar x={40} y={28} r={-90} long />
        </RTool>
        <RTool label="水平居中对齐">
          <path d="M28 1V55" stroke="#808080" strokeWidth="4" />
          <rect x="16" y="8" width="24" height="15" {...G} /><circle cx="28" cy="40" r="8" {...G} />
          <Ar x={14} y={16} r={180} /><Ar x={42} y={16} r={0} /><Ar x={14} y={40} r={180} /><Ar x={42} y={40} r={0} />
        </RTool>
        <RTool label="垂直居中对齐">
          <path d="M0 28H56" stroke="#808080" strokeWidth="4" />
          <circle cx="16" cy="28" r="8" {...G} /><rect x="33" y="17" width="16" height="22" {...G} />
          <Ar x={16} y={15} r={-90} /><Ar x={41} y={15} r={-90} /><Ar x={16} y={41} r={90} /><Ar x={41} y={41} r={90} />
        </RTool>
        <RSep />
        <RTool label="页面水平居中">
          <path d="M4 5V51M53 5V51" stroke="#000" strokeWidth="4" />
          <rect x="22" y="12" width="13" height="33" fill="#abcbf5" stroke="#3a6090" strokeWidth="2" />
          <Ar x={20} y={28} r={180} blue /><Ar x={37} y={28} r={0} blue />
        </RTool>
        <RTool label="页面垂直居中">
          <path d="M5 4H51M5 53H51" stroke="#000" strokeWidth="4" />
          <rect x="11" y="22" width="34" height="13" fill="#abcbf5" stroke="#3a6090" strokeWidth="2" />
          <Ar x={28} y={20} r={-90} blue /><Ar x={28} y={37} r={90} blue />
        </RTool>
        <RTool label="模板水平居中">
          <rect x="1" y="5" width="54" height="46" rx="4" fill="#f2f4fc" stroke="#7486a5" strokeWidth="2" />
          <rect x="22" y="12" width="13" height="33" fill="#abcbf5" stroke="#3a6090" strokeWidth="2" />
          <Ar x={20} y={28} r={180} blue /><Ar x={37} y={28} r={0} blue />
        </RTool>
        <RTool label="模板垂直居中">
          <rect x="1" y="5" width="53" height="46" rx="4" fill="#f2f4fc" stroke="#7486a5" strokeWidth="2" />
          <rect x="11" y="22" width="34" height="12" fill="#abcbf5" stroke="#3a6090" strokeWidth="2" />
          <Ar x={28} y={20} r={-90} blue /><Ar x={28} y={36} r={90} blue />
        </RTool>
        <RSep />
        <RTool label="水平分布">
          <rect x="1" y="16" width="13" height="23" {...G} /><rect x="43" y="16" width="13" height="23" {...G} />
          <path d="M16 28L25 20V26H32V20L41 28L32 36V30H25V36Z" fill="#b0b0b0" />
        </RTool>
        <RTool label="垂直分布">
          <rect x="16" y="1" width="24" height="12" {...G} /><rect x="16" y="43" width="24" height="12" {...G} />
          <path d="M28 16L36 25H31V32H36L28 41L20 32H25V25H20Z" fill="#b0b0b0" />
        </RTool>
        <RSep />
        <RTool label="向左旋转90度" text="90º">{rotL}</RTool>
        <RTool label="旋转180度" text="180º">
          <path d="M1 4L7 9Q28 -8 49 9L55 4V24H34L41 15Q28 2 15 15L22 24H1Z" fill="url(#azure)" />
        </RTool>
        <RTool label="向右旋转90度" text="90º">{rotR}</RTool>
        <RTool label="向左旋转1度" text="1º">{rotL}</RTool>
        <RTool label="向右旋转1度" text="1º">{rotR}</RTool>
      </div>
      <button aria-label="更多排列按钮" className="flex h-5 items-center justify-end bg-linear-to-r from-[#d3dfee] to-[#8ea5c6] pr-1">
        <Ic vb="0 0 14 12" className="h-3 w-[14px]">
          <path d="M3 2V11M7 1L14 7L7 12Z" fill="#fff" stroke="#fff" strokeWidth="1.500" />
          <path d="M2 1V10" stroke="#000" strokeWidth="2" />
          <path d="M6 0L12 5L6 10Z" fill="#000" />
        </Ic>
      </button>
    </div>
  );
}

/* ---------- left data-source panel ---------- */

const S28 = ({ children }: Kids) => <Ic vb="0 0 28 28" className="h-7 w-7">{children}</Ic>;

const icons: Record<string, React.ReactNode> = {
  bt: <BtFile />,
  clock: (
    <S28>
      <circle cx="14" cy="14" r="12" fill="#e4eafa" stroke="#7a78c4" strokeWidth="3" />
      <path d="M14 6V14H20" stroke="#34346c" strokeWidth="2" />
      <path d="M14 24V22M4 14H6M22 14H24" stroke="#6a6ab0" />
    </S28>
  ),
  date: (
    <S28>
      <rect x="1" y="3" width="26" height="24" fill="url(#paper)" stroke="#56698f" />
      <rect x="1" y="3" width="26" height="5" fill="#4079e0" />
      <path d="M8 0V4M19 0V4" stroke="#333" strokeWidth="2" />
      <text x="14" y="23" textAnchor="middle" fontSize="16" fontWeight="700" fill="#222" fontFamily="Liberation Serif">12</text>
    </S28>
  ),
  serial: (
    <S28><text x="14" y="20" textAnchor="middle" fontSize="16" fontWeight="700" fill="#333" fontFamily="Liberation Sans">001</text></S28>
  ),
  db: (
    <S28>
      <rect x="1" y="1" width="17" height="21" fill="url(#paper)" stroke="#7486a8" />
      <rect x="1" y="1" width="17" height="4" fill="url(#sheet)" />
      <path d="M2 9H12M2 13H12M2 17H12" stroke="#9eacc8" />
      <rect x="11" y="6" width="16" height="21" fill="url(#paper)" stroke="#56688c" />
      <rect x="11" y="6" width="16" height="5" fill="url(#sheet)" />
      <path d="M12 15H26M12 19H26M12 23H26" stroke="#98a7c4" />
    </S28>
  ),
  table: (
    <S28>
      <rect x="3" y="2" width="23" height="22" fill="url(#paper)" stroke="#53678f" />
      <rect x="3" y="2" width="23" height="5" fill="url(#sheet)" />
      <path d="M3 12H26M3 18H26M11 7V24M19 7V24" stroke="#7c92bb" />
      <path d="M1 13Q6 10 11 13V24Q6 27 1 24Z" fill="url(#gold)" stroke="#a57a14" />
    </S28>
  ),
  form: <FormIcon />,
  abc: (
    <S28>
      <path d="M8 2H20V13H8ZM1 15H13V27H1ZM15 15H27V27H15Z" fill="#fdf6a4" stroke="#111" strokeWidth="2" />
      <g fontSize="10" fontWeight="700" fill="#1414d0" fontFamily="Liberation Sans">
        <text x="10.500" y="11">A</text><text x="3.500" y="25">B</text><text x="17.500" y="25">C</text>
      </g>
    </S28>
  ),
  globe: (
    <S28>
      <circle cx="14" cy="14" r="13" fill="url(#globe)" />
      <path d="M2 10Q6 1 16 2Q14 8 9 10Q6 14 2 14ZM4 20Q12 18 17 24Q14 28 9 26ZM21 5Q27 9 26 18Q20 14 21 5Z" fill="#46a33c" />
    </S28>
  ),
  values: (
    <S28>
      <rect x="1" y="3" width="26" height="22" rx="2" fill="#e8effa" stroke="#73809c" />
      <path d="M5 5V11M9 5V11M14 5V11M18 5V11M23 5V11" stroke="#000" strokeWidth="2.500" />
      <text x="4" y="23" fontSize="12" fontWeight="700" fill="#111" fontFamily="Liberation Serif">T</text>
      <path d="M16 14Q12 18 16 22M22 14Q26 18 22 22M19 17V19" stroke="#90209c" strokeWidth="1.800" />
    </S28>
  ),
  picture: <Cactus />,
  job: (
    <S28>
      <path d="M5 2H18L23 7V25H5Z" fill="url(#paper)" stroke="#53657f" />
      <path d="M18 2V7H23Z" fill="#7084a5" />
      <path d="M11 8L10 19M16 8L15 19M8 11H18M8 16H17" stroke="#1a1a80" strokeWidth="1.800" />
    </S28>
  ),
  floppy: <Floppy className="h-[30px] w-[28px]" />,
  vb: (
    <S28>
      <path d="M6 6H24M6 6V22M6 6L24 20" stroke="#a58a10" strokeWidth="1.500" />
      <path d="M5 1L10 6L5 10L0 6Z" fill="#18f018" />
      <path d="M19 2H27V10H19ZM2 18H10V26H2ZM19 15H27V23H19Z" fill="#0a7c0a" />
    </S28>
  ),
  script: (
    <S28><text x="14" y="23" textAnchor="middle" fontSize="26" fontStyle="italic" fontWeight="700" fill="#333" fontFamily="Liberation Serif">T</text></S28>
  ),
};

type Row = { t: string; icon?: string; box?: "-" | "+"; deep?: boolean; sel?: boolean };
const none: Row = { t: "<无>" };
const rows: Row[] = [
  { t: "嵌入的数据", icon: "bt" },
  { t: "时间", icon: "clock" },
  { t: "日期", icon: "date" },
  { t: "序列号", icon: "serial" },
  { t: "数据库", icon: "db", box: "-" }, none,
  { t: "表数据字段", icon: "table", box: "-" }, none,
  { t: "数据输入字段", icon: "form", box: "-" }, none,
  { t: "具名数据源", icon: "abc", box: "-" },
  { t: "varTest", icon: "bt", deep: true, sel: true },
  { t: "全局数据字段", icon: "globe", box: "-" }, none,
  { t: "对象值", icon: "values", box: "-" },
  { t: "图片 1", icon: "picture", box: "+", deep: true },
  { t: "打印作业字段", icon: "job", box: "+" },
  { t: "外部文件", icon: "floppy" },
  { t: "Visual Basic 脚本", icon: "vb" },
  { t: "打印机代码模板字段", icon: "script", box: "-" }, none,
];

function Tree() {
  return (
    <ul role="tree" className="flex-1 border-l border-[#b8b8b8] bg-white">
      {rows.map((r, i) => (
        <li key={i} role="treeitem" className={"flex h-[35px] items-center " + (r.deep ? "pl-11" : r.icon ? "pl-[11px]" : "pl-[110px]")}>
          {r.icon ? (
            <>
              {r.box ? (
                <button aria-label={r.box === "-" ? "折叠" : "展开"} className="h-4 w-4">
                  <Ic vb="0 0 16 16" className="h-4 w-4">
                    <rect x="1" y="1" width="14" height="14" rx="1" fill="#f4f4f4" stroke="#989898" strokeWidth="1.500" />
                    <path d={r.box === "-" ? "M4 8H12" : "M4 8H12M8 4V12"} stroke="#3c5fb4" strokeWidth="1.500" />
                  </Ic>
                </button>
              ) : (
                <span className="w-4" />
              )}
              <span className="ml-[10px]">{icons[r.icon]}</span>
              <span className={r.sel ? "ml-[6px] bg-[#f0f0f0] px-[3px] pb-0.5" : "ml-[9px] pb-0.5"}>{r.t}</span>
            </>
          ) : (
            <span className="pb-0.5">{r.t}</span>
          )}
        </li>
      ))}
    </ul>
  );
}

const Cross = ({ className = "h-[14px] w-[14px]", c = "#000", w = 2.5 }: { className?: string; c?: string; w?: number }) => (
  <Ic vb="0 0 16 16" className={className}><path d="M1 1L15 15M15 1L1 15" stroke={c} strokeWidth={w} /></Ic>
);

function LeftPanel() {
  return (
    <aside className="flex w-[437px] flex-col">
      <header className="flex h-[38px] items-center border-t-2 border-r border-l border-[#9fa9b4] bg-[#bfcddb] pr-2 pl-[6px]">
        <h2 className="flex-1">数据源</h2>
        <button aria-label="固定" className="mr-[14px]">
          <Ic vb="0 0 12 18" className="h-[18px] w-3">
            <path d="M3 1H9V10H3ZM0 10.500H12M6 11V17M8 1V10" stroke="#000" strokeWidth="1.800" />
          </Ic>
        </button>
        <button aria-label="关闭面板"><Cross /></button>
      </header>
      <Tree />
      <nav className="flex h-[37px] items-start bg-[#f0f0f0] text-[#8a8a8a]">
        <button className="flex h-[34px] items-center gap-2 border-t-2 border-[#9a9a9a] pr-2 pl-[13px]">
          <Ic vb="0 0 24 28" className="h-7 w-6">
            <path d="M2 10H9V7Q6 1 11 1Q16 1 13 7V10H21V14Q13 13 13 18Q13 22 21 21V27H2Z" fill="url(#green)" stroke="#145a14" strokeWidth="1.800" />
          </Ic>
          组件
        </button>
        <div className="h-[34px] border-t-2 border-[#9a9a9a] pt-1"><div className="h-6 w-px bg-[#a8a8a8]" /></div>
        <button className="flex h-[34px] items-center gap-2 border-t-2 border-[#9a9a9a] pr-2 pl-2">
          <Ic vb="0 0 26 28" className="h-7 w-[26px]">
            <rect x="12" y="9" width="13" height="15" fill="#46536c" />
            <path d="M8 20H18V13" stroke="#c5cddb" strokeWidth="6" />
            <rect x="1" y="3" width="16" height="17" fill="url(#gold)" stroke="#6e571a" />
          </Ic>
          图层
        </button>
        <button className="flex h-[34px] items-center gap-1 rounded-b border-r-2 border-b-2 border-l-2 border-[#9a9a9a] bg-white px-[6px] text-black">
          <AbTag />
          数据源
        </button>
        <div className="h-px flex-1 border-t-2 border-[#9a9a9a]" />
      </nav>
    </aside>
  );
}

/* ---------- document ---------- */

const MM = 19.52;

function TopRuler() {
  const marks = Array.from({ length: 100 }, (_, i) => i - 1);
  return (
    <div className="flex h-[33px] bg-linear-to-b from-[#eff5fe] to-[#dae6f3]">
      <div className="w-[32px]" />
      <svg className="h-[33px] w-full flex-1" fontFamily="Noto Sans CJK SC" fontSize="21" fontWeight="300">
        {marks.filter((m) => m < 99).map((m) => {
          const x = Math.round(26 + m * MM);
          const top = m % 10 === 0 ? 2 : m % 5 === 0 ? 15 : 23;
          return <path key={m} d={`M${x} ${top}V31`} stroke={m % 5 ? "#000" : "#333"} strokeWidth="2" />;
        })}
        {marks.filter((m) => m % 10 === 0 && m < 99).map((m) => (
          <text key={m} x={Math.round(22 + m * MM)} y="21" textAnchor="end">{m}</text>
        ))}
        <text x="1936" y="21" fontWeight="400">毫米</text>
        <path d="M1520 2V31" stroke="#5a4634" strokeWidth="2" />
        <path d="M0 32H3000" stroke="#000" strokeWidth="2" />
      </svg>
    </div>
  );
}

function SideRuler() {
  const marks = Array.from({ length: 58 }, (_, i) => i - 1);
  return (
    <div className="w-[33px] shrink-0 overflow-hidden border-r-2 border-black bg-linear-to-r from-[#eff5fe] to-[#dae6f3]">
      <svg className="h-[1142px] w-full" fontFamily="Noto Sans CJK SC" fontSize="21" fontWeight="300">
        {marks.map((m) => {
          const y = Math.round(28 + m * MM);
          const left = m % 10 === 0 ? 2 : m % 5 === 0 ? 15 : 23;
          return <path key={m} d={`M${left} ${y}H33`} stroke={m % 5 ? "#000" : "#333"} strokeWidth={m === 30 ? 3 : 2} />;
        })}
        {marks.filter((m) => m % 10 === 0).map((m) => (
          <text key={m} textAnchor="end" transform={`translate(23 ${Math.round(33 + m * MM)}) rotate(-90)`}>{m}</text>
        ))}
      </svg>
    </div>
  );
}

const Chev = ({ d }: { d: string }) => (
  <Ic vb="0 0 16 16" className="h-4 w-4"><path d={d} stroke="#555" strokeWidth="3.500" /></Ic>
);

const Sun = () => (
  <g>
    <path d="M8 0L10 4L14 2L13 6L17 8L13 10L14 15L10 13L8 17L6 13L2 15L3 10L0 8L3 6L2 2L6 4Z" fill="#f8a410" />
    <circle cx="8" cy="8.500" r="4" fill="#ffe23a" />
  </g>
);

function SheetTab({ label, gold, children, className }: Kids & { label: string; gold?: boolean; className: string }) {
  return (
    <button aria-label={label} className={"relative -mr-3 flex h-8 items-center justify-center " + className}>
      <svg viewBox="0 0 100 32" preserveAspectRatio="none" className="absolute inset-0 h-full w-full" aria-hidden="true">
        <path d="M0 0L14 29Q15 31 17 31H83Q85 31 86 29L100 0" fill={gold ? "url(#tabGold)" : "url(#tabBlue)"} stroke="#a3a3a3" strokeWidth="1.500" />
      </svg>
      <span className="relative">{children}</span>
    </button>
  );
}

function Document() {
  return (
    <main className="flex min-w-0 flex-1 flex-col">
      <div className="flex h-[37px] items-end pl-2">
        <div className="flex h-[33px] w-[141px] items-center border-t-2 border-r-2 border-l-2 border-t-white border-r-black border-l-white bg-linear-to-b from-[#fff0c8] to-[#ffd878] pl-2">
          <button className="flex-1 pb-0.5 text-left font-bold">Test.btw</button>
          <button aria-label="关闭文档" className="mr-[9px]"><Cross className="h-[15px] w-[15px]" /></button>
        </div>
      </div>
      <div className="flex min-h-0 flex-1 flex-col border-t-[3px] border-r-2 border-b-2 border-l-[3px] border-t-[#767676] border-r-[#f6f6f6] border-b-[#f6f6f6] border-l-[#808080]">
        <TopRuler />
        <div className="flex min-h-0 flex-1">
          <SideRuler />
          <div className="flex min-w-0 flex-1 flex-col">
            <div className="flex min-h-0 flex-1">
              <div className="flex min-w-0 flex-1 overflow-hidden bg-linear-to-b from-[#c6d9f1] to-[#839ebf] pt-7 pr-6 pb-[26px] pl-[25px]">
                <div className="flex-1 rounded-[60px] bg-white shadow-[0_2px_22px_9px_rgba(75,85,102,0.62)]" />
              </div>
              <div className="flex w-[30px] flex-col items-center border-l-2 border-white bg-[#f0f0f0] py-[6px]">
                <Chev d="M2 12L8 5L14 12" />
                <div className="h-[163px]" />
                <div className="h-[740px] w-[26px] bg-[#cdcdcd]" />
                <div className="flex-1" />
                <Chev d="M2 4L8 11L14 4" />
              </div>
            </div>
            <div className="flex h-[29px] items-center border-t-2 border-white bg-[#f0f0f0] px-[6px]">
              <Chev d="M12 2L5 8L12 14" />
              <div className="w-[310px]" />
              <div className="h-[26px] w-[1308px] bg-[#cdcdcd]" />
              <div className="flex-1" />
              <Chev d="M4 2L11 8L4 14" />
              <div className="w-[30px]" />
            </div>
          </div>
        </div>
        <div className="flex h-[38px] items-start pl-4">
          <SheetTab label="模板 1" gold className="w-24 text-xl">模板 1</SheetTab>
          <SheetTab label="新建模板" className="w-[60px]">
            <Ic vb="0 0 30 30" className="h-[30px] w-[30px]">
              <path d="M8 6H20L25 11V28H8Z" fill="url(#paper)" stroke="#53657f" strokeWidth="1.500" />
              <path d="M20 6V11H25Z" fill="#6d80a0" />
              <Sun />
            </Ic>
          </SheetTab>
          <SheetTab label="表单 1" className="w-[92px] text-xl">表单 1</SheetTab>
          <SheetTab label="新建表单" className="w-[60px]">
            <Ic vb="0 0 30 30" className="h-[30px] w-[30px]">
              <rect x="4" y="5" width="24" height="22" fill="url(#cream)" stroke="#4b62a0" />
              <rect x="4" y="5" width="24" height="5" fill="#2a64dd" />
              <path d="M8 16H12M8 22H12" stroke="#64759c" strokeWidth="1.500" />
              <rect x="15" y="14" width="9" height="4" fill="#fff" stroke="#7890c0" />
              <rect x="15" y="20" width="9" height="4" fill="#fff" stroke="#7890c0" />
              <Sun />
            </Ic>
          </SheetTab>
        </div>
      </div>
    </main>
  );
}

/* ---------- properties dialog ---------- */

const dlgIcons: Record<string, React.ReactNode> = {
  size: (
    <S28>
      <rect x="1" y="1" width="16" height="16" fill="#fff" stroke="#6a788e" strokeWidth="1.500" />
      <path d="M18 7H22V4L28 10L22 16V12H18ZM7 18V22H4L9 28L15 22H12V18Z" fill="#5580d8" />
    </S28>
  ),
  border: <S28><rect x="3" y="5" width="20" height="17" fill="#fff" stroke="#222" strokeWidth="2" /></S28>,
  adjust: (
    <S28>
      <path d="M1 9Q4 4 9 4L15 22Z" fill="#2430d8" />
      <path d="M7 4L13 3L15 22Z" fill="#7a1ce0" />
      <path d="M12 3L18 4L16 22Z" fill="#e81a8c" />
      <path d="M17 4L23 6L17 22Z" fill="#f0a018" />
      <path d="M22 6Q26 8 26 12L17 23Z" fill="#28a838" />
      <path d="M11 19L20 19L18 25H14Z" fill="#c4c4c4" />
    </S28>
  ),
  crop: (
    <S28>
      <rect x="1" y="1" width="22" height="20" fill="url(#paper)" stroke="#7186ae" />
      <path d="M4 3L10 9M10 4V10H4" stroke="#203050" strokeWidth="1.800" />
      <path d="M15 4V8M19 4V8" stroke="#e89060" strokeWidth="2" />
      <rect x="12" y="11" width="15" height="15" fill="#dbe6f8" stroke="#35559a" strokeWidth="1.500" />
      <circle cx="22" cy="16" r="3" fill="#ee7a4a" />
      <path d="M14 24L19 19L26 25V26H13Z" fill="#34549c" />
    </S28>
  ),
  effect: (
    <S28>
      <rect width="28" height="28" fill="#000" />
      <text x="14" y="-3" transform="scale(1 -1)" textAnchor="middle" fontSize="31" fontWeight="700" fill="#fff" fontFamily="Liberation Serif">A</text>
    </S28>
  ),
  position: <RulerCorner />,
  error: (
    <S28>
      <rect x="3" y="3" width="20" height="19" fill="#e6ecfb" stroke="#8c9cc0" />
      <circle cx="20" cy="17" r="7.500" fill="#e2502a" />
      <path d="M17 14L23 20M23 14L17 20" stroke="#fff" strokeWidth="2" />
    </S28>
  ),
  picture: <Cactus />,
  source: <AbTag />,
};

const props: [string, string][] = [
  ["图片", "picture"], ["大小", "size"], ["边框", "border"], ["图片调整", "adjust"], ["剪裁", "crop"],
  ["效果", "effect"], ["位置", "position"], ["错误处理", "error"], ["数据源", "source"],
];

const Joint = ({ last }: { last?: boolean }) => (
  <span className="flex w-[18px] flex-col self-stretch">
    <span className="flex-1 border-b-2 border-l-2 border-dotted border-[#b0b0b0]" />
    <span className={last ? "flex-1" : "flex-1 border-l-2 border-dotted border-[#b0b0b0]"} />
  </span>
);

function PropertyTree() {
  return (
    <div className="flex w-[325px] flex-col border-2 border-[#7c7c7c] bg-white">
      <div className="flex h-[45px] items-start gap-[5px] border-b-[3px] border-[#6e6e6e] bg-[#f0f0f0] pt-[3px] pl-1">
        <button aria-label="对象视图" className="flex h-9 w-10 items-center justify-center border-2 border-[#98cdf2] bg-[#bfdcf2]">
          <Ic vb="0 0 28 24" className="h-6 w-7">
            <rect x="4" y="5" width="20" height="14" fill="url(#navy)" />
            {[[4, 5], [24, 5], [4, 19], [24, 19]].map(([x, y]) => (
              <circle key={x + "-" + y} cx={x} cy={y} r="3" fill="#14e03c" stroke="#000" strokeWidth="2" />
            ))}
          </Ic>
        </button>
        <button aria-label="层叠视图" className="flex h-9 w-8 items-center">
          <Ic vb="0 0 30 30" className="h-[30px] w-[28px]">
            <rect x="1" y="1" width="20" height="14" fill="url(#navy)" stroke="#213c80" />
            <rect x="5" y="8" width="20" height="14" fill="url(#navy)" stroke="#b9c8ec" />
            <rect x="9" y="15" width="20" height="14" fill="url(#navy)" stroke="#b9c8ec" />
          </Ic>
        </button>
      </div>
      <ul role="tree">
        <li className="flex h-[35px] items-center gap-[9px] pl-[5px] font-bold"><Cactus />图片 1</li>
        {props.map(([t, ic], i) => (
          <li key={t} className="flex h-[35px] items-center pl-[19px]">
            <Joint last={i === props.length - 1} />
            {dlgIcons[ic]}
            <span className={i === 0 ? "ml-[6px] bg-[#f0f0f0] px-[3px] leading-[35px]" : "ml-[9px]"}>{t}</span>
          </li>
        ))}
        <li className="flex h-[35px] items-center pl-[52px]">
          <Joint last />
          <span className="mr-3 ml-[2px]"><Cylinder className="h-6 w-[22px]" /></span>
          {"字段:<空>"}
        </li>
      </ul>
    </div>
  );
}

const L = ({ t, k, c = ":" }: { t: string; k: string; c?: string }) => (
  <>{t}(<span className="underline">{k}</span>){c}</>
);

const btnOn = "border-2 border-[#b4b4b4] bg-[#e1e1e1] text-black";
const btnOff = "border-2 border-[#c2c2c2] bg-[#cccccc] text-[#858585]";

const Down = ({ c }: { c: string }) => (
  <Ic vb="0 0 16 10" className="pointer-events-none absolute top-[14px] right-2 h-[10px] w-4">
    <path d="M1 1L8 8L15 1" stroke={c} strokeWidth="2" />
  </Ic>
);

function Radio({ id, on, children }: Kids & { id: string; on?: boolean }) {
  return (
    <>
      <input
        id={id}
        type="radio"
        name="source"
        defaultChecked={on}
        className="h-6 w-6 appearance-none rounded-full border-2 border-[#6a6a6a] bg-white checked:bg-[#333] checked:shadow-[inset_0_0_0_4px_#fff]"
      />
      <label htmlFor={id} className="ml-[5px]">{children}</label>
    </>
  );
}

function SourceForm() {
  return (
    <div className="min-w-0 flex-1 border-2 border-[#8a8a8a] pt-[10px] pr-[10px] pl-[14px]">
      <fieldset className="h-[432px] border-2 border-[#dcdcdc] px-[12px]">
        <legend className="px-[2px] leading-7">图片源</legend>
        <div className="flex h-[44px] items-center">
          <label htmlFor="kind" className="w-[138px]"><L t="图片源" k="P" /></label>
          <div className="relative h-[37px] w-[365px]">
            <select id="kind" className="h-full w-full appearance-none border-2 border-[#a8a8a8] bg-[#e1e1e1] pl-1">
              <option>外部图片文件</option>
            </select>
            <Down c="#555" />
          </div>
        </div>
        <div className="flex h-[46px] items-center"><Radio id="r1"><L t="指定文件名" k="F" c="" /></Radio></div>
        <div className="flex h-[51px] items-center pr-[19px] pl-[29px]">
          <label htmlFor="file" className="w-[126px] text-[#a0a0a0]"><L t="文件名" k="N" /></label>
          <input id="file" disabled className="h-[37px] min-w-0 flex-1 border-2 border-[#d0d0d0] bg-[#f0f0f0]" />
          <button disabled className={"ml-[11px] h-[38px] w-[176px] " + btnOff}><L t="选择文件" k="S" c="..." /></button>
        </div>
        <div className="flex h-[48px] items-center"><Radio id="r2"><L t="从数据库字段获取文件名" k="I" c="" /></Radio></div>
        <div className="flex h-[46px] items-center pr-[19px] pl-[29px]">
          <label htmlFor="field" className="w-[126px] text-[#a0a0a0]"><L t="字段名" k="E" /></label>
          <div className="relative h-[37px] min-w-0 flex-1 border-2 border-[#d0d0d0] bg-white p-[3px] pr-8">
            <select id="field" disabled className="block h-full w-full appearance-none bg-[#f0f0f0]" />
            <Down c="#b0b0b0" />
          </div>
          <button disabled className={"ml-[11px] h-[38px] w-[317px] " + btnOff}><L t="数据库连接设置" k="C" c="..." /></button>
        </div>
        <div className="flex h-[62px] items-center pr-[19px] pl-[29px]">
          <label htmlFor="dir" className="w-[126px] text-[#a0a0a0]"><L t="默认路径" k="D" /></label>
          <input id="dir" disabled className="h-[37px] min-w-0 flex-1 border-2 border-[#959595] bg-[#f0f0f0]" />
          <button disabled className={"ml-[11px] h-[38px] w-[176px] " + btnOff}><L t="选择路径" k="A" c="..." /></button>
        </div>
        <div className="flex h-[38px] items-center"><Radio id="r3" on><L t="从数据源获取文件名" k="U" c="" /></Radio></div>
        <div className="relative flex h-[60px] items-center pr-[19px] pl-[29px]">
          <label htmlFor="path" className="w-[126px] pb-1"><L t="默认路径" k="P" /></label>
          <input id="path" className="h-[18px] min-w-0 flex-1 bg-white" />
          <button className={"ml-[11px] h-[38px] w-[176px] " + btnOn}><L t="选择路径" k="L" c="..." /></button>
          <svg viewBox="0 0 480 56" className="pointer-events-none absolute top-[11px] left-[135px] h-14 w-[480px]" aria-hidden="true">
            <path d="M4 0H34V36L448 36V0H478Q484 20 472 34L466 45L420 48L400 52L230 54L200 52L60 54L38 49L18 46V36H4Q-4 20 4 0Z" fill="#e4e4e5" />
            <path d="M34 0H448V18H34Z" fill="#f0f0f0" />
            <path d="M34 18H448V36H34Z" fill="#fff" />
            <path d="M4 0H18V36H4Q-4 20 4 0Z" fill="#dddfe1" />
            <path d="M18 18H34V36H18ZM448 0H466V36H448Z" fill="#e9eaeb" />
          </svg>
        </div>
      </fieldset>
    </div>
  );
}

function PropertiesDialog() {
  return (
    <section role="dialog" aria-label="图片 属性" className="absolute top-[338px] left-[762px] flex h-[997px] w-[1218px] flex-col border border-[#6e6e6e] border-b-[#bdbdbd] bg-[#f0f0f0] shadow-[0_6px_28px_rgba(0,0,0,0.32)]">
      <header className="flex h-[54px] items-center bg-white pr-[21px] pl-[14px]">
        <AppLogo className="h-7 w-7" />
        <h1 className="ml-[5px] flex-1 pb-0.5">图片 属性</h1>
        <button aria-label="关闭对话框"><Cross className="h-4 w-4" c="#444" w={1.5} /></button>
      </header>
      <div className="flex min-h-0 flex-1 gap-[15px] px-3 pt-3">
        <PropertyTree />
        <SourceForm />
      </div>
      <footer className="relative flex h-[67px] items-start justify-end gap-[17px] pt-[17px] pr-[14px]">
        <button className={"h-[37px] w-32 " + btnOn}>关闭</button>
        <button className={"h-[37px] w-32 " + btnOn}>帮助</button>
        <Ic vb="0 0 20 20" className="absolute right-0 bottom-0 h-5 w-5">
          <path d="M1 20L20 1M7 20L20 7M13 20L20 13" stroke="#9a9a9a" strokeWidth="2" />
        </Ic>
      </footer>
    </section>
  );
}

function Annotations() {
  return (
    <div className="pointer-events-none absolute inset-0">
      <div className="absolute top-[393px] left-[1112px] h-[123px] w-[709px] rounded border-[5px] border-[#ff2010]" />
      <div className="absolute top-[742px] left-[1095px] h-[124px] w-[925px] rounded border-[5px] border-[#ff2010]" />
      <svg viewBox="0 0 370 90" className="absolute top-[404px] left-[1807px] h-[90px] w-[370px]" aria-hidden="true">
        <path d="M0 82L15 68L14 74L368 2Q370 4 366 5L16 85L19 88Z" fill="#ff2010" />
      </svg>
      <svg viewBox="0 0 222 36" className="absolute top-[774px] left-[2017px] h-9 w-[222px]" aria-hidden="true">
        <path d="M0 27L18 15L16 21L218 4Q222 6 218 8L18 32L22 35Z" fill="#ff2010" />
      </svg>
      <p className="absolute top-[866px] left-[1338px] font-['Noto_Sans_CJK_SC',sans-serif] text-5xl leading-[72px] text-[#ff2010]">存放图片文件夹</p>
    </div>
  );
}

/* ---------- page ---------- */

const menus = ["文件(F)", "编辑(E)", "查看(V)", "创建(C)", "排列(A)", "管理(D)", "工具(T)", "窗口(W)", "帮助(H)"];

const Cell = ({ children, className }: Kids & { className: string }) => (
  <div className={"flex h-full items-center gap-[10px] pt-2 whitespace-pre " + className}>{children}</div>
);

export default function App() {
  return (
    <div className="relative flex h-screen min-h-[1100px] flex-col overflow-hidden border-r-2 border-[#1c1c1c] bg-[#cfdcee] font-['Noto_Sans','Noto_Sans_CJK_SC',sans-serif] text-[21px] leading-[30px] text-black">
      <Defs />
      <header className="flex h-[42px] items-center border-b border-[#8f9bad] bg-white pl-[2px]">
        <AppLogo className="h-7 w-7" />
        <h1 className="ml-[6px] flex-1 text-[#8c8c8c]">Test.btw* - BarTender Designer</h1>
        <button aria-label="最小化" className="w-[82px]"><Ic vb="0 0 16 16" className="mx-auto h-4 w-4"><path d="M0 9H16" stroke="#a0a0a0" strokeWidth="1.500" /></Ic></button>
        <button aria-label="还原" className="w-[82px]"><Ic vb="0 0 16 16" className="mx-auto h-4 w-4"><path d="M1 4H12V15H1ZM4 4V1H15V12H12" stroke="#a0a0a0" strokeWidth="1.500" /></Ic></button>
        <button aria-label="关闭" className="w-[82px]"><Cross className="mx-auto h-4 w-4" c="#a0a0a0" w={1.5} /></button>
      </header>
      <nav className="flex h-12 items-center gap-[30px] pb-[3px] pl-5">
        {menus.map((m) => <button key={m}>{m}</button>)}
      </nav>
      <div className="flex flex-col gap-px pl-[6px]">
        <div className="flex gap-[5px]"><StandardBar /><ObjectBar /><ViewBar /></div>
        <div className="flex gap-[5px]"><TextBar /><LineBar /></div>
      </div>
      <div className="flex min-h-0 flex-1">
        <LeftPanel />
        <div className="w-[7px] bg-[#f0f0f0]" />
        <Document />
        <div className="w-[3px]" />
        <ArrangeBar />
      </div>
      <footer className="flex h-[33px] items-center divide-x divide-[#93a8c8] overflow-hidden border-t border-white bg-linear-to-b from-[#dbe6f5] to-[#aec2dc] text-[22px]">
        <Cell className="w-[432px] pl-[6px]"><Printer className="h-[26px] w-[27px]" />打印机: Microsoft Print to PDF</Cell>
        <Cell className="w-[650px] pl-[7px]"><Cactus />对象: 图片 1</Cell>
        <Cell className="w-[648px] pl-[7px]"><RulerCorner />{"X: 28.1毫米  Y: 7.8毫米  角: 0.0°"}</Cell>
        <Cell className="flex-1 pl-[7px]">
          <S28>
            <path d="M2 6H20V27H2Z" fill="#f7f9ff" stroke="#7482a8" />
            <path d="M6 16H9M12 16H18M6 21H9M12 21H18" stroke="#7c95d0" strokeWidth="2" />
            <path d="M5 9L14 2H26V13L20 16L14 10L8 13Z" fill="url(#gold)" stroke="#8c6c12" />
          </S28>
          {"宽度: 20毫米  高度: 20毫米  来源: 路径"}
        </Cell>
        <Cell className="w-[178px] pl-[9px]">
          <Ic className="h-7 w-7"><Lens><path d="M12 22H34M23 11V33" stroke="#4b6d96" strokeWidth="6" /></Lens></Ic>
          295%
          <button aria-label="缩放级别" className="ml-[10px]"><Ic vb="0 0 12 8" className="h-2 w-3"><path d="M0 0H12L6 8Z" fill="#000" /></Ic></button>
        </Cell>
      </footer>
      <PropertiesDialog />
      <Annotations />
    </div>
  );
}
